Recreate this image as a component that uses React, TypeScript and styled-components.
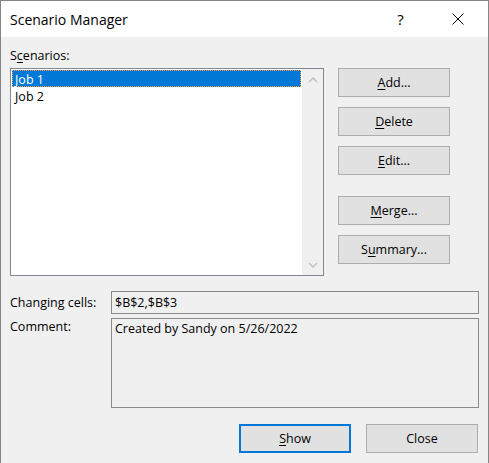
import React from "react";
import styled, { createGlobalStyle } from "styled-components";

const Global = createGlobalStyle`
  html, body { margin: 0; padding: 0; background: #f0f0f0; }
  * { box-sizing: border-box; }
`;

const FONT = `"Segoe UI", "Open Sans", "Noto Sans", sans-serif`;

const Window = styled.div`
  width: 489px;
  height: 463px;
  border: 1px solid #858585;
  border-bottom: none;
  background: #f0f0f0;
  display: flex;
  flex-direction: column;
  font-family: ${FONT};
  font-size: 12.5px;
  color: #000;
  overflow: hidden;
`;

const TitleBar = styled.div`
  height: 36px;
  background: #fff;
  display: flex;
  align-items: center;
  padding-left: 9px;
  padding-right: 2px;
`;

const Title = styled.div`
  flex: 1;
  font-size: 14px;
  line-height: 20px;
  padding-top: 1px;
`;

const TitleButton = styled.div`
  width: 57px;
  height: 36px;
  display: flex;
  align-items: center;
  justify-content: center;
  font-size: 15px;
`;

const Body = styled.div`
  padding: 11px 9px 0 9px;
  display: flex;
  flex-direction: column;
`;

const TopGrid = styled.div`
  display: grid;
  grid-template-columns: 314px 112px;
  column-gap: 14px;
  row-gap: 4px;
  align-items: start;
`;

const Label = styled.div<{ $top?: boolean }>`
  line-height: 16px;
  white-space: nowrap;
  align-self: ${(p) => (p.$top ? "start" : "center")};
  padding-top: ${(p) => (p.$top ? "1px" : "0")};
`;

const Key = styled.span`
  text-decoration: underline;
  text-underline-offset: 2px;
`;

const ListBox = styled.div`
  grid-column: 1;
  height: 208px;
  border: 1px solid #828790;
  display: flex;
`;

const List = styled.div`
  flex: 1;
  background: #fff;
  padding: 1px;
`;

const Item = styled.div<{ $selected?: boolean }>`
  height: 17px;
  line-height: 16px;
  padding-left: 2px;
  padding-top: 1px;
  border: 1px ${(p) => (p.$selected ? "dotted #f2a04a" : "solid transparent")};
  background: ${(p) => (p.$selected ? "#0078d7" : "transparent")};
  color: ${(p) => (p.$selected ? "#fff" : "#000")};
`;

const ScrollTrack = styled.div`
  width: 21px;
  background: #f0f0f0;
  display: flex;
  flex-direction: column;
  justify-content: space-between;
`;

const ArrowBox = styled.div`
  height: 21px;
  display: flex;
  align-items: center;
  justify-content: center;
`;

const ButtonColumn = styled.div`
  display: flex;
  flex-direction: column;
  gap: 10px;
`;

const Button = styled.div<{ $spaced?: boolean; $default?: boolean }>`
  width: 112px;
  height: 29px;
  margin-top: ${(p) => (p.$spaced ? "11px" : "0")};
  background: #e1e1e1;
  border: ${(p) => (p.$default ? "2px solid #0078d7" : "1px solid #adadad")};
  display: flex;
  align-items: center;
  justify-content: center;
  line-height: 16px;
  white-space: nowrap;
`;

const BottomGrid = styled.div`
  margin-top: 15px;
  display: grid;
  grid-template-columns: 101px 1fr;
  row-gap: 4px;
`;

const Field = styled.div<{ $tall?: boolean }>`
  height: ${(p) => (p.$tall ? "90px" : "23px")};
  border: 1px solid #8a8a8a;
  background: #f0f0f0;
  padding: ${(p) => (p.$tall ? "2px 3px" : "0 3px")};
  display: flex;
  align-items: ${(p) => (p.$tall ? "flex-start" : "center")};
  line-height: 16px;
`;

const Footer = styled.div`
  margin-top: 16px;
  padding-right: 1px;
  display: flex;
  justify-content: flex-end;
  gap: 15px;
`;

const Chevron = ({ up }: { up?: boolean }) => (
  <svg width="10" height="6" viewBox="0 0 10 6">
    <polyline
      points={up ? "1,5 5,1 9,5" : "1,1 5,5 9,1"}
      fill="none"
      stroke="#c4c4c4"
      strokeWidth="1.6"
    />
  </svg>
);

const CloseGlyph = () => (
  <svg width="12" height="12" viewBox="0 0 12 12">
    <path d="M0.5 0.5 L11.5 11.5 M11.5 0.5 L0.5 11.5" stroke="#000" strokeWidth="1" />
  </svg>
);

export default function App() {
  return (
    <>
      <Global />
      <Window>
        <TitleBar>
          <Title>Scenario Manager</Title>
          <TitleButton>?</TitleButton>
          <TitleButton>
            <CloseGlyph />
          </TitleButton>
        </TitleBar>
        <Body>
          <TopGrid>
            <Label>
              S<Key>c</Key>enarios:
            </Label>
            <div />
            <ListBox>
              <List>
                <Item $selected>Job 1</Item>
                <Item>Job 2</Item>
              </List>
              <ScrollTrack>
                <ArrowBox>
                  <Chevron up />
                </ArrowBox>
                <ArrowBox>
                  <Chevron />
                </ArrowBox>
              </ScrollTrack>
            </ListBox>
            <ButtonColumn>
              <Button>
                <Key>A</Key>dd...
              </Button>
              <Button>
                <Key>D</Key>elete
              </Button>
              <Button>
                <Key>E</Key>dit...
              </Button>
              <Button $spaced>
                <Key>M</Key>erge...
              </Button>
              <Button>
                S<Key>u</Key>mmary...
              </Button>
            </ButtonColumn>
          </TopGrid>
          <BottomGrid>
            <Label>Changing cells:</Label>
            <Field>$B$2,$B$3</Field>
            <Label $top>Comment:</Label>
            <Field $tall>Created by Sandy on 5/26/2022</Field>
          </BottomGrid>
          <Footer>
            <Button $default>
              <Key>S</Key>how
            </Button>
            <Button>Close</Button>
          </Footer>
        </Body>
      </Window>
    </>
  );
}
